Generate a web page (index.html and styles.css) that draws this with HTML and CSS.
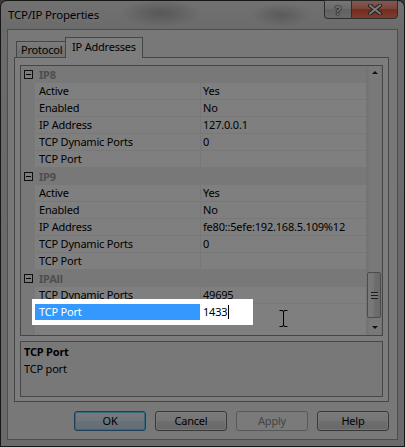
FILE: index.html
```html
<!DOCTYPE html>
<html>
<head>
<meta charset="utf-8">
<link rel="stylesheet" href="styles.css">
</head>
<body>
<div class="window">
  <div class="titlebar">
    <span class="title">TCP/IP Properties</span>
    <div class="caps">
      <div class="cap cap-help">?</div>
      <div class="cap cap-close">
        <svg width="14" height="11" viewBox="0 0 14 11"><path d="M2 1.5 L12 9.5 M12 1.5 L2 9.5" stroke="#3a3a3a" stroke-width="4" stroke-linecap="round"/><path d="M2 1.5 L12 9.5 M12 1.5 L2 9.5" stroke="#f4f4f4" stroke-width="2.2" stroke-linecap="round"/></svg>
      </div>
    </div>
  </div>
  <div class="client">
    <div class="tabs">
      <div class="tab tab-protocol">Protocol</div>
      <div class="tab tab-active">IP Addresses</div>
    </div>
    <div class="tabpanel">
      <div class="grid">
        <div class="rows">
          <div class="cat"><span class="pm"></span><span class="cat-name">IP8</span></div>
          <div class="row"><span class="k">Active</span><span class="v">Yes</span></div>
          <div class="row"><span class="k">Enabled</span><span class="v">No</span></div>
          <div class="row"><span class="k">IP Address</span><span class="v">127.0.0.1</span></div>
          <div class="row"><span class="k">TCP Dynamic Ports</span><span class="v">0</span></div>
          <div class="row"><span class="k">TCP Port</span><span class="v"></span></div>
          <div class="cat"><span class="pm"></span><span class="cat-name">IP9</span></div>
          <div class="row"><span class="k">Active</span><span class="v">Yes</span></div>
          <div class="row"><span class="k">Enabled</span><span class="v">No</span></div>
          <div class="row"><span class="k">IP Address</span><span class="v">fe80::5efe:192.168.5.109%12</span></div>
          <div class="row"><span class="k">TCP Dynamic Ports</span><span class="v">0</span></div>
          <div class="row"><span class="k">TCP Port</span><span class="v"></span></div>
          <div class="cat"><span class="pm"></span><span class="cat-name">IPAll</span></div>
          <div class="row"><span class="k">TCP Dynamic Ports</span><span class="v">49695</span></div>
          <div class="row row-sel"><span class="spot"></span><span class="k">TCP Port</span><span class="v">1433<span class="caret"></span></span></div>
          <div class="filler"></div>
        </div>
        <div class="vscroll">
          <div class="sb-btn sb-up"><span class="arr-up"></span></div>
          <div class="sb-track">
            <div class="sb-thumb"><span class="grip"></span></div>
          </div>
          <div class="sb-btn sb-down"><span class="arr-down"></span></div>
        </div>
      </div>
      <div class="desc">
        <div class="desc-title">TCP Port</div>
        <div class="desc-text">TCP port</div>
      </div>
    </div>
    <div class="buttons">
      <div class="btn btn-default">OK</div>
      <div class="btn">Cancel</div>
      <div class="btn btn-disabled">Apply</div>
      <div class="btn">Help</div>
    </div>
  </div>
  <div class="dim"></div>
  <svg class="ibeam" width="9" height="17" viewBox="0 0 9 17">
    <path d="M0.5 0.5 H3 Q4.5 0.5 4.5 2 Q4.5 0.5 6 0.5 H8.5 M4.5 2 V15 M0.5 16.5 H3 Q4.5 16.5 4.5 15 Q4.5 16.5 6 16.5 H8.5" fill="none" stroke="#000" stroke-width="1"/>
  </svg>
</div>
</body>
</html>
```
FILE: styles.css
```css
* { box-sizing: border-box; }
html, body { margin: 0; padding: 0; }
body {
  width: 405px;
  height: 447px;
  overflow: hidden;
  background: #3a3a3a;
  font-family: "Noto Sans", "Open Sans", sans-serif;
  font-size: 11px;
  letter-spacing: -0.2px;
  color: #000;
}
.window {
  position: relative;
  width: 405px;
  height: 447px;
  display: flex;
  flex-direction: column;
  padding: 0 6px 6px 6px;
  border: 1px solid #2e2e2e;
  border-radius: 7px 7px 0 0;
  background:
    radial-gradient(ellipse 40px 14px at 160px 12px, rgba(90,90,90,0.35), rgba(90,90,90,0)),
    radial-gradient(ellipse 30px 12px at 280px 14px, rgba(90,90,90,0.3), rgba(90,90,90,0)),
    linear-gradient(#e2e2e2, #d6d6d6 30px, #d4d4d4);
}
.titlebar {
  height: 28px;
  display: flex;
  justify-content: space-between;
  align-items: flex-start;
  padding-left: 1px;
}
.title {
  font-size: 11.5px;
  margin-top: 6px;
  line-height: 16px;
  text-shadow: 0 0 6px rgba(255,255,255,0.9);
}
.caps {
  display: flex;
  margin-top: -1px;
  margin-right: 0;
}
.cap {
  height: 19px;
  border: 1px solid #5a5a5a;
  display: flex;
  align-items: center;
  justify-content: center;
}
.cap-help {
  width: 27px;
  border-right: none;
  border-radius: 0 0 0 4px;
  background: linear-gradient(#eeeeee, #d8d8d8 45%, #c4c4c4 50%, #d2d2d2);
  font-weight: 700;
  font-size: 13px;
  color: #e8e8e8;
  text-shadow: 0 0 1px #333, 0 0 1px #333, 0 0 2px #333;
}
.cap-close {
  width: 47px;
  border-radius: 0 0 4px 0;
  background: linear-gradient(#ffb4a4, #f88a74 45%, #ee5a40 50%, #f47a60);
}
.client {
  flex: 1;
  border: 1px solid #9a9a9a;
  background: #f0f0f0;
  padding: 7px 8px 8px 6px;
  display: flex;
  flex-direction: column;
}
.tabs {
  height: 20px;
  display: flex;
  align-items: flex-end;
  padding-left: 2px;
}
.tab {
  border: 1px solid #898c95;
  border-bottom: none;
  white-space: nowrap;
}
.tab-protocol {
  width: 49px;
  height: 16px;
  padding-left: 4px;
  line-height: 15px;
  border-right: none;
  background: linear-gradient(#f6f6f6, #ebebeb 50%, #dedede 50%, #e6e6e6);
}
.tab-active {
  position: relative;
  z-index: 1;
  width: 78px;
  height: 21px;
  margin-bottom: -1px;
  padding-left: 6px;
  line-height: 18px;
  background: #fbfbfb;
}
.tabpanel {
  height: 345px;
  border: 1px solid #898c95;
  background: #fbfbfb;
  padding: 7px 5px 4px 5px;
  display: flex;
  flex-direction: column;
  gap: 5px;
}
.grid {
  height: 271px;
  border: 1px solid #8a8a8a;
  display: flex;
}
.rows {
  width: 345px;
  display: flex;
  flex-direction: column;
  background: linear-gradient(to right, #f0f0f0 14px, #ffffff 14px);
}
.cat {
  height: 17px;
  background: #f0f0f0;
  display: flex;
  align-items: center;
  padding-left: 3px;
}
.pm {
  width: 9px;
  height: 9px;
  border: 1px solid #1c1c1c;
  background: #f8f8f8;
  position: relative;
  flex: none;
}
.pm::after {
  content: "";
  position: absolute;
  left: 1px;
  top: 3px;
  width: 5px;
  height: 1px;
  background: #000;
}
.cat-name {
  margin-left: 6px;
  font-weight: 700;
  color: #9c9c9c;
  line-height: 16px;
}
.row {
  height: 17px;
  display: flex;
  padding-left: 14px;
}
.k, .v {
  height: 17px;
  line-height: 16px;
  border-bottom: 1px solid #f0f0f0;
  white-space: nowrap;
  overflow: hidden;
}
.k {
  width: 166px;
  padding-left: 4px;
  border-right: 1px solid #f0f0f0;
  background: #ffffff;
}
.v {
  flex: 1;
  padding-left: 2px;
  background: #ffffff;
}
.row-sel {
  position: relative;
  z-index: 6;
}
.spot {
  position: absolute;
  left: 11px;
  top: -5px;
  width: 221px;
  height: 26px;
  background: #ffffff;
  z-index: -1;
}
.row-sel .k {
  background: #3399ff;
  background-clip: padding-box;
  color: #ffffff;
  border-bottom-color: transparent;
  border-right-color: transparent;
}
.row-sel .v {
  background: transparent;
  border-bottom-color: transparent;
  display: flex;
  align-items: center;
}
.caret {
  display: inline-block;
  width: 1px;
  height: 14px;
  background: #000;
  margin-left: 1px;
}
.filler {
  flex: 1;
}
.vscroll {
  width: 16px;
  display: flex;
  flex-direction: column;
  background: linear-gradient(to right, #e6e6e6, #f2f2f2 3px, #f2f2f2 13px, #e6e6e6);
  border-left: 1px solid #e8e8e8;
}
.sb-btn {
  height: 17px;
  display: flex;
  justify-content: center;
}
.sb-up { align-items: center; padding-bottom: 4px; }
.sb-down { align-items: center; padding-top: 2px; }
.arr-up {
  width: 0; height: 0;
  border-left: 3px solid transparent;
  border-right: 3px solid transparent;
  border-bottom: 3px solid #222;
}
.arr-down {
  width: 0; height: 0;
  border-left: 3px solid transparent;
  border-right: 3px solid transparent;
  border-top: 3px solid #222;
}
.sb-track {
  flex: 1;
  display: flex;
  flex-direction: column;
  justify-content: flex-end;
  padding: 0 0 0 0;
}
.sb-thumb {
  height: 46px;
  margin: 0 1px 0 0;
  border: 1px solid #989898;
  border-radius: 2px;
  background: linear-gradient(to right, #f4f4f4, #ececec 50%, #dcdcdc 50%, #d4d4d4);
  display: flex;
  align-items: center;
  justify-content: center;
}
.grip {
  width: 7px;
  height: 7px;
  background: repeating-linear-gradient(#3a3a3a 0 1px, #f0f0f0 1px 3px);
}
.desc {
  height: 56px;
  border: 1px solid #8e8e8e;
  background: #f0f0f0;
  padding: 1px 3px;
  line-height: 17px;
}
.desc-title { font-weight: 700; }
.buttons {
  margin-top: 9px;
  height: 20px;
  display: flex;
  justify-content: flex-end;
  gap: 9px;
}
.btn {
  width: 72px;
  height: 20px;
  border: 1px solid #707070;
  border-radius: 3px;
  background: linear-gradient(#f4f4f4, #ebebeb 50%, #dddddd 50%, #d0d0d0);
  box-shadow: inset 0 0 0 1px rgba(255,255,255,0.6);
  display: flex;
  align-items: center;
  justify-content: center;
  line-height: 16px;
}
.btn-default {
  border-color: #3c7fb1;
  background: linear-gradient(#eef5fa, #e0edf7 50%, #cfe3f2 50%, #c4dcee);
  box-shadow: inset 0 0 0 1px #6fd4fb;
}
.btn-disabled {
  border-color: #adb2b5;
  background: #f4f4f4;
  box-shadow: none;
  color: #8a8a8a;
}
.dim {
  position: absolute;
  left: -1px;
  top: -1px;
  width: 405px;
  height: 447px;
  background: rgba(0,0,0,0.5);
  z-index: 5;
  border-radius: 7px 7px 0 0;
}
.ibeam {
  position: absolute;
  left: 278px;
  top: 309px;
  z-index: 7;
}
```
